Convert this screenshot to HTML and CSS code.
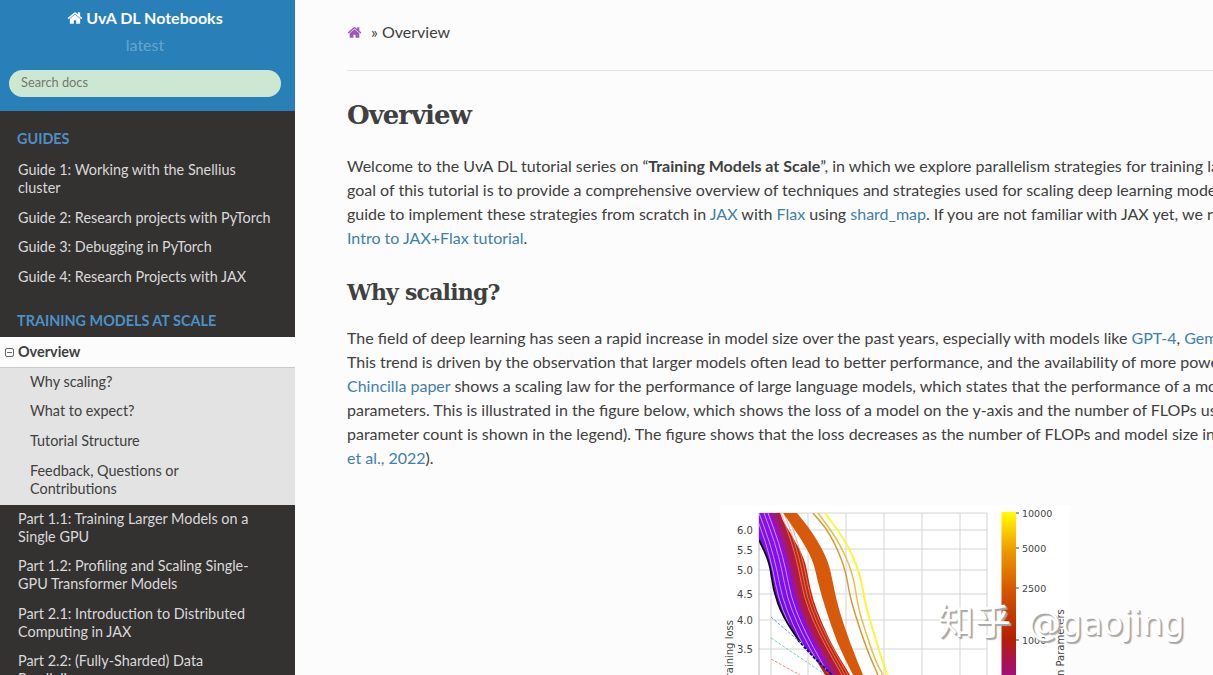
FILE: index.html
```html
<!DOCTYPE html>
<html lang="en">
<head>
<meta charset="utf-8">
<title>Overview - UvA DL Notebooks</title>
<link rel="stylesheet" href="styles.css">
</head>
<body>
<div class="page">
  <nav class="sidebar">
    <div class="side-head">
      <a class="logo"><svg class="home" viewBox="0 0 1792 1792"><path d="M1472 992v480q0 26-19 45t-45 19h-384v-384h-256v384h-384q-26 0-45-19t-19-45v-480q0-1 .5-3t.5-3l575-474 575 474q1 2 1 6zm223-69l-62 74q-8 9-21 11h-3q-13 0-21-7l-692-577-692 577q-12 8-24 7-13-2-21-11l-62-74q-8-10-7-23.500t11-21.500l719-599q32-26 76-26t76 26l244 204v-195q0-14 9-23t23-9h192q14 0 23 9t9 23v408l219 182q10 8 11 21.500t-7 23.500z"/></svg> UvA DL Notebooks</a>
      <div class="version">latest</div>
      <input class="search" type="text" placeholder="Search docs">
    </div>
    <div class="menu">
      <p class="caption">Guides</p>
      <a class="item">Guide 1: Working with the Snellius cluster</a>
      <a class="item">Guide 2: Research projects with PyTorch</a>
      <a class="item">Guide 3: Debugging in PyTorch</a>
      <a class="item">Guide 4: Research Projects with JAX</a>
      <p class="caption caption-next">Training Models at Scale</p>
      <a class="item current"><svg class="toggle" viewBox="0 0 9 9"><rect x="0.5" y="0.5" width="8" height="8" rx="1.5"/><path d="M2 4.500h5"/></svg>Overview</a>
      <div class="subitems">
        <a class="subitem">Why scaling?</a>
        <a class="subitem">What to expect?</a>
        <a class="subitem">Tutorial Structure</a>
        <a class="subitem">Feedback, Questions or Contributions</a>
      </div>
      <a class="item">Part 1.1: Training Larger Models on a Single GPU</a>
      <a class="item">Part 1.2: Profiling and Scaling Single-GPU Transformer Models</a>
      <a class="item">Part 2.1: Introduction to Distributed Computing in JAX</a>
      <a class="item">Part 2.2: (Fully-Sharded) Data<br>Parallelism</a>
    </div>
  </nav>
  <main class="main">
    <div class="crumbs"><svg class="crumb-home" viewBox="0 0 1792 1792"><path d="M1472 992v480q0 26-19 45t-45 19h-384v-384h-256v384h-384q-26 0-45-19t-19-45v-480q0-1 .5-3t.5-3l575-474 575 474q1 2 1 6zm223-69l-62 74q-8 9-21 11h-3q-13 0-21-7l-692-577-692 577q-12 8-24 7-13-2-21-11l-62-74q-8-10-7-23.500t11-21.500l719-599q32-26 76-26t76 26l244 204v-195q0-14 9-23t23-9h192q14 0 23 9t9 23v408l219 182q10 8 11 21.500t-7 23.500z"/></svg><span>» Overview</span></div>
    <hr class="rule">
    <h1>Overview</h1>
    <p>Welcome to the UvA DL tutorial series on “<strong>Training Models at Scale</strong>”, in which we explore parallelism strategies for training large deep learning models. The<br>
    goal of this tutorial is to provide a comprehensive overview of techniques and strategies used for scaling deep learning models, and to<br>
    guide to implement these strategies from scratch in <a>JAX</a> with <a>Flax</a> using <a>shard_map</a>. If you are not familiar with JAX yet, we recommend<br>
    <a>Intro to JAX+Flax tutorial</a>.</p>
    <h2>Why scaling?</h2>
    <p>The field of deep learning has seen a rapid increase in model size over the past years, especially with models like <a>GPT-4</a>, <a>Gemini</a>, and<br>
    This trend is driven by the observation that larger models often lead to better performance, and the availability of more powerful<br>
    <a>Chincilla paper</a> shows a scaling law for the performance of large language models, which states that the performance of a model<br>
    parameters. This is illustrated in the figure below, which shows the loss of a model on the y-axis and the number of FLOPs used<br>
    parameter count is shown in the legend). The figure shows that the loss decreases as the number of FLOPs and model size in<br>
    <a>et al., 2022</a>).</p>
    <figure class="figure">
      <svg class="chart" viewBox="720 505 350 170" width="350" height="170">
        <defs>
          <linearGradient id="cbar" x1="0" y1="0" x2="0" y2="1">
            <stop offset="0" stop-color="#ffff00"/>
            <stop offset="0.1" stop-color="#fbd000"/>
            <stop offset="0.22" stop-color="#ec9a00"/>
            <stop offset="0.45" stop-color="#d45500"/>
            <stop offset="0.72" stop-color="#b42000"/>
            <stop offset="0.88" stop-color="#a81060"/>
            <stop offset="1" stop-color="#a01090"/>
          </linearGradient>
          <linearGradient id="purples" gradientUnits="userSpaceOnUse" x1="760" y1="575" x2="795" y2="560">
            <stop offset="0" stop-color="#5a08c0"/>
            <stop offset="0.35" stop-color="#7c0ef4"/>
            <stop offset="0.8" stop-color="#8c10e8"/>
            <stop offset="1" stop-color="#a01090"/>
          </linearGradient>
          <path id="pr" d="M772 513L777.500 528Q783 543 786.500 556.500Q790 570 792.500 583.500Q795 597 800 610Q805 623 811 635Q817 647 825 661L833 675"/>
          <clipPath id="plot"><rect x="759" y="513" width="228" height="162"/></clipPath>
          <clipPath id="purple-area"><path d="M772 513L777.500 528Q783 543 786.500 556.500Q790 570 792.500 583.500Q795 597 800 610Q805 623 811 635Q817 647 825 661L833 675H830L815 658.500Q800 642 791.500 629.500Q783 617 778 603.500Q773 590 771.500 576.500Q770 563 764.500 551.500L759 540V513Z"/></clipPath>
        </defs>
        <rect class="chart-bg" x="720" y="505" width="350" height="170"/>
        <g class="grid">
          <path d="M771 513V675M808 513V675M846 513V675M884 513V675M922 513V675M960 513V675M987 513V675"/>
          <path d="M759 513H987M759 530H987M759 549H987M759 570H987M759 594H987M759 620H987M759 649H987"/>
          <path class="axis" d="M759 513V675"/>
        </g>
        <g clip-path="url(#plot)">
          <path class="f-red" d="M772 513H778L785.500 525Q793 537 799 548.500Q805 560 806.500 568.500Q808 577 810.500 588.500Q813 600 817.500 611.500Q822 623 827.500 635Q833 647 841.500 661L850 675H825L780 600Z"/>
          <path fill="url(#purples)" d="M772 513L777.500 528Q783 543 786.500 556.500Q790 570 792.500 583.500Q795 597 800 610Q805 623 811 635Q817 647 825 661L833 675H830L815 658.500Q800 642 791.500 629.500Q783 617 778 603.500Q773 590 771.500 576.500Q770 563 764.500 551.500L759 540V513Z"/>
          <g clip-path="url(#purple-area)">
            <use href="#pr" class="l-pale" transform="translate(-4 0)"/>
            <use href="#pr" class="l-pale" transform="translate(-8 0)"/>
            <use href="#pr" class="l-pale" transform="translate(-13 0)"/>
            <use href="#pr" class="l-pale" transform="translate(-17 0)"/>
          </g>
          <use href="#pr" class="l-magenta" transform="translate(2 0)"/>
          <use href="#pr" class="l-crimson" transform="translate(6 0)"/>
          <use href="#pr" class="l-pink" transform="translate(9 0)"/>
          <use href="#pr" class="l-pink" transform="translate(12 0)"/>
          <use href="#pr" class="l-pink" transform="translate(15 0)"/>
          <path class="f-orange" d="M783 513L791.500 525Q800 537 806.500 548.500Q813 560 815.500 571.500Q818 583 821.500 595Q825 607 831 625Q837 643 845 659L853 675H863L856.500 659Q850 643 844 625Q838 607 835.500 595Q833 583 830.500 571.500Q828 560 820.500 546.500Q813 533 805 523L797 513Z"/>
          <path class="l-black" d="M759 540L764.500 551.500Q770 563 771.500 576.500Q773 590 778 603.500Q783 617 791.500 629.500Q795 635 800 642"/>
          <path class="l-navy" d="M798 640Q805 648 815 658.500L832 675"/>
          <path class="l-gold" d="M813 513L821.500 523Q830 533 837.500 550Q845 567 847.500 582Q850 597 853.500 608.500Q857 620 862 635Q867 650 872.500 662.500L878 675"/>
          <path class="l-amber" d="M818 513L828 526.500Q838 540 845.500 556.500Q853 573 855.500 590Q858 607 861.500 618.500Q865 630 870 645Q875 660 879 667.500L883 675"/>
          <path class="l-yellow" d="M825 513L836 528Q847 543 853.500 558Q860 573 862.500 588Q865 603 868.500 615Q872 627 877 643.500Q882 660 884.500 667.500L887 675"/>
        </g>
        <path class="dash d-blue" d="M771 617L800 642"/>
        <path class="dash d-green" d="M771 638L823 673"/>
        <path class="dash d-red" d="M771 659L800 675"/>
        <g class="ticks">
          <text x="737" y="534">6.0</text>
          <text x="737" y="554">5.5</text>
          <text x="737" y="574">5.0</text>
          <text x="737" y="598">4.5</text>
          <text x="737" y="624">4.0</text>
          <text x="737" y="653">3.5</text>
          <text class="bar-label" x="1022" y="517">10000</text>
          <text class="bar-label" x="1022" y="552">5000</text>
          <text class="bar-label" x="1022" y="592">2500</text>
          <text class="bar-label" x="1022" y="644">1000</text>
          <text transform="translate(733 682) rotate(-90)">Training loss</text>
          <text transform="translate(1064 758) rotate(-90)">Number of Million Parameters</text>
        </g>
        <rect x="1001.500" y="512" width="14.500" height="175" fill="url(#cbar)"/>
        <path class="tick-mark" d="M1016 513h3M1016 548h3M1016 588h3M1016 640h3"/>
      </svg>
    </figure>
  </main>
  <div class="watermark"><span class="wm-cjk">知乎</span><span class="wm-lat">@gaojing</span></div>
</div>
</body>
</html>
```
FILE: styles.css
```css
html, body { margin: 0; padding: 0; height: 100%; overflow: hidden; }
body { font-family: "Lato", "Liberation Sans", sans-serif; font-size: 16px; color: #404040; background: #fcfcfc; }
a { text-decoration: none; }
.page { position: relative; display: flex; width: 1213px; height: 675px; overflow: hidden; }

.sidebar { flex: 0 0 295px; width: 295px; height: 675px; overflow: hidden; background: #343131; }
.side-head { height: 111px; box-sizing: border-box; padding: 8px 5px 0 0; background: #2980b9; text-align: center; display: flex; flex-direction: column; align-items: center; }
.logo { font-size: 16px; font-weight: 700; line-height: 19px; color: #fcfcfc; display: block; }
.home { width: 16px; height: 16px; fill: #fcfcfc; vertical-align: -2px; margin-right: -1px; }
.version { margin-top: 8px; font-size: 16px; line-height: 19px; color: rgba(255, 255, 255, 0.3); }
.search { box-sizing: border-box; width: 272px; height: 27px; margin-top: 16px; padding: 0 12px 3px; border: 0; border-radius: 50px; background: #cde8d2; font-family: inherit; font-size: 12.800px; color: #404040; outline: none; }
.search::placeholder { color: #6f7a72; opacity: 1; }

.caption { margin: 12.300px 0 0; padding: 0 17px; height: 32px; line-height: 32px; font-size: 14.400px; font-weight: 700; text-transform: uppercase; color: #4e90c5; white-space: nowrap; }
.caption-next { margin-top: 12.400px; line-height: 33px; }
.item { display: block; padding: 5.800px 18px; font-size: 14.400px; line-height: 18px; color: #d9d9d9; }
.current { position: relative; margin-top: 1px; padding-top: 6px; padding-bottom: 5.800px; background: #fcfcfc; color: #404040; font-weight: 700; box-sizing: border-box; height: 30px; }
.toggle { position: absolute; left: 5px; top: 11px; width: 9px; height: 9px; fill: none; stroke: #404040; stroke-width: 0.800; }
.subitems { padding-bottom: 0.300px; background: #e3e3e3; border-top: 0; box-shadow: 0 1px 0 #e3e3e3, inset 0 1px 0 #c9c9c9; }
.subitem { display: block; padding: 5.800px 30px; font-size: 14.400px; line-height: 18px; color: #404040; }

.main { flex: 0 0 1096px; width: 1096px; padding: 0 0 0 52px; margin: 0; background: #fcfcfc; white-space: nowrap; }
.crumbs { display: flex; align-items: center; gap: 9px; height: 24px; margin-top: 20px; font-size: 16px; line-height: 24px; }
.crumb-home { width: 15px; height: 15px; fill: #9b59b6; }
.rule { margin: 26px 0 0; border: 0; border-top: 1px solid #e1e4e5; }
h1 { margin: 26px 0 0; font-family: "DejaVu Serif", "Liberation Serif", serif; font-size: 26px; letter-spacing: -1px; line-height: 36px; font-weight: 700; color: #404040; }
h2 { margin: 27px 0 0; font-family: "DejaVu Serif", "Liberation Serif", serif; font-size: 22px; letter-spacing: -0.800px; line-height: 30px; font-weight: 700; color: #404040; }
p { margin: 21px 0 0; font-size: 16px; line-height: 24px; }
h2 + p { margin-top: 19px; }
p a { color: #3f7fae; }
strong { font-weight: 700; }
.figure { margin: 35px 0 0; display: flex; justify-content: center; width: 1096px; }
.chart { display: block; flex: none; }
.chart-bg { fill: #fff; }
.grid path { fill: none; stroke: #d4d4d4; stroke-width: 1; }
.grid .axis { stroke: #b8b8b8; }
.f-red { fill: #c2280c; }
.f-orange { fill: #d8590a; }
.l-magenta { fill: none; stroke: #a01880; stroke-width: 4; }
.l-crimson { fill: none; stroke: #b01c40; stroke-width: 4; }
.l-pale { fill: none; stroke: #d8b0ff; stroke-width: 0.800; }
.l-pink { fill: none; stroke: #e89080; stroke-width: 0.700; }
.l-black { fill: none; stroke: #0c0c0c; stroke-width: 1.800; }
.l-navy { fill: none; stroke: #101060; stroke-width: 2; stroke-dasharray: 3 1.500; }
.l-gold { fill: none; stroke: #d69a34; stroke-width: 1.500; }
.l-amber { fill: none; stroke: #e8c040; stroke-width: 1.500; }
.l-yellow { fill: none; stroke: #f8f838; stroke-width: 2; }
.dash { fill: none; stroke-width: 0.800; stroke-dasharray: 3 1.500; }
.d-blue { stroke: #3d7fd0; }
.d-green { stroke: #3fd8a0; }
.d-red { stroke: #e87060; }
.ticks text { font-family: "DejaVu Sans", sans-serif; font-size: 10px; fill: #444; }
.ticks .bar-label { font-size: 9.500px; }
.tick-mark { fill: none; stroke: #444; stroke-width: 1; }

.watermark { position: absolute; left: 938px; top: 596px; white-space: nowrap; color: #fff; text-shadow: 1px 1px 0 #a9a9a9, 2px 2px 1px #a9a9a9; line-height: 46px; }
.wm-cjk { font-family: "Noto Sans CJK SC", sans-serif; font-size: 36px; letter-spacing: 1px; }
.wm-lat { font-family: "DejaVu Sans", sans-serif; font-size: 33px; letter-spacing: 0.250px; margin-left: 16px; }
```
